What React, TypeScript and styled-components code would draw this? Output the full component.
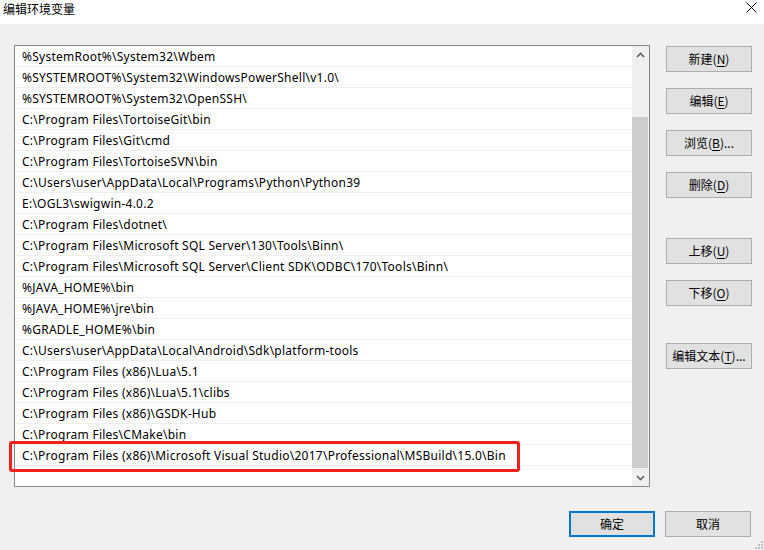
import React from "react";
import styled, { createGlobalStyle } from "styled-components";

const GlobalStyle = createGlobalStyle`
  html, body {
    margin: 0;
    padding: 0;
    background: #f0f0f0;
  }
  body {
    font-family: "Noto Sans", "Noto Sans CJK SC", sans-serif;
    font-size: 12px;
    color: #000;
  }
`;

const Window = styled.div`
  position: relative;
  width: 764px;
  height: 550px;
  background: #f0f0f0;
  display: flex;
  flex-direction: column;
  overflow: hidden;
`;

const TitleBar = styled.div`
  height: 24px;
  flex: 0 0 24px;
  background: #fff;
  display: flex;
  align-items: center;
  justify-content: space-between;
  padding: 0 7px 0 3px;
  box-sizing: border-box;
`;

const Title = styled.span`
  font-family: "Noto Sans CJK SC", sans-serif;
  font-size: 12px;
  line-height: 1;
  margin-top: -7px;
`;

const Close = styled.span`
  display: flex;
  margin-top: -9px;
`;

const Body = styled.div`
  flex: 1;
  display: flex;
  flex-direction: column;
`;

const MainRow = styled.div`
  display: flex;
  gap: 16px;
  padding: 21px 0 0 14px;
`;

const ListBox = styled.div`
  position: relative;
  width: 636px;
  height: 442px;
  box-sizing: border-box;
  border: 1px solid #828790;
  background: #fff;
  display: flex;
`;

const Rows = styled.div`
  flex: 1;
  display: flex;
  flex-direction: column;
`;

const Row = styled.div`
  height: 21px;
  box-sizing: border-box;
  border-bottom: 1px solid #f0f0f0;
  padding: 1px 0 0 7px;
  display: flex;
  align-items: center;
  white-space: nowrap;
  font-family: "Noto Sans", "Noto Sans CJK SC", sans-serif;
  font-size: 12px;
  letter-spacing: 0.25px;
`;

const ScrollBar = styled.div`
  width: 17px;
  flex: 0 0 17px;
  background: #f0f0f0;
  display: flex;
  flex-direction: column;
`;

const ArrowBtn = styled.div`
  height: 17px;
  flex: 0 0 17px;
  display: flex;
  align-items: center;
  justify-content: center;
`;

const Track = styled.div`
  flex: 1;
  display: flex;
  flex-direction: column;
  padding: 0 1px 0 0;
`;

const Thumb = styled.div<{ $top: number; $height: number }>`
  margin-top: ${(p) => p.$top}px;
  height: ${(p) => p.$height}px;
  background: #cdcdcd;
`;

const Highlight = styled.div`
  position: absolute;
  left: -6px;
  top: 395px;
  width: 511px;
  height: 31px;
  box-sizing: border-box;
  border: 3px solid #f0201a;
  border-radius: 3px;
  pointer-events: none;
`;

const ButtonColumn = styled.div`
  display: flex;
  flex-direction: column;
  padding-top: 1px;
`;

const Button = styled.div<{ $gap?: number; $default?: boolean }>`
  width: 86px;
  height: 26px;
  box-sizing: border-box;
  margin-top: ${(p) => p.$gap ?? 0}px;
  background: #e1e1e1;
  border: ${(p) => (p.$default ? "2px solid #0078d7" : "1px solid #adadad")};
  display: flex;
  align-items: center;
  justify-content: center;
  padding-bottom: 1px;
  font-family: "Noto Sans CJK SC", sans-serif;
  font-size: 12px;
  white-space: nowrap;
  u {
    text-underline-offset: 2px;
  }
`;

const Footer = styled.div`
  display: flex;
  justify-content: flex-end;
  gap: 10px;
  padding: 24px 13px 0 0;
`;

const Grip = styled.svg`
  position: absolute;
  right: 1px;
  bottom: 1px;
`;

const paths = [
  "%SystemRoot%\\System32\\Wbem",
  "%SYSTEMROOT%\\System32\\WindowsPowerShell\\v1.0\\",
  "%SYSTEMROOT%\\System32\\OpenSSH\\",
  "C:\\Program Files\\TortoiseGit\\bin",
  "C:\\Program Files\\Git\\cmd",
  "C:\\Program Files\\TortoiseSVN\\bin",
  "C:\\Users\\user\\AppData\\Local\\Programs\\Python\\Python39",
  "E:\\OGL3\\swigwin-4.0.2",
  "C:\\Program Files\\dotnet\\",
  "C:\\Program Files\\Microsoft SQL Server\\130\\Tools\\Binn\\",
  "C:\\Program Files\\Microsoft SQL Server\\Client SDK\\ODBC\\170\\Tools\\Binn\\",
  "%JAVA_HOME%\\bin",
  "%JAVA_HOME%\\jre\\bin",
  "%GRADLE_HOME%\\bin",
  "C:\\Users\\user\\AppData\\Local\\Android\\Sdk\\platform-tools",
  "C:\\Program Files (x86)\\Lua\\5.1",
  "C:\\Program Files (x86)\\Lua\\5.1\\clibs",
  "C:\\Program Files (x86)\\GSDK-Hub",
  "C:\\Program Files\\CMake\\bin",
  "C:\\Program Files (x86)\\Microsoft Visual Studio\\2017\\Professional\\MSBuild\\15.0\\Bin",
];

const Chevron = ({ up }: { up?: boolean }) => (
  <svg width="9" height="6" viewBox="0 0 9 6">
    <path
      d={up ? "M1 5 L4.5 1.5 L8 5" : "M1 1 L4.5 4.5 L8 1"}
      fill="none"
      stroke="#606060"
      strokeWidth="1.6"
    />
  </svg>
);

const label = (text: string, key: string, suffix = "") => (
  <span>
    {text}(<u>{key}</u>){suffix}
  </span>
);

export default function App() {
  return (
    <Window>
      <GlobalStyle />
      <TitleBar>
        <Title>编辑环境变量</Title>
        <Close>
          <svg width="11" height="11" viewBox="0 0 11 11">
            <path d="M0.5 0.5 L10.5 10.5 M10.5 0.5 L0.5 10.5" stroke="#000" strokeWidth="1" />
          </svg>
        </Close>
      </TitleBar>
      <Body>
        <MainRow>
          <ListBox>
            <Rows>
              {paths.map((p) => (
                <Row key={p}>{p}</Row>
              ))}
            </Rows>
            <ScrollBar>
              <ArrowBtn>
                <Chevron up />
              </ArrowBtn>
              <Track>
                <Thumb $top={54} $height={351} />
              </Track>
              <ArrowBtn>
                <Chevron />
              </ArrowBtn>
            </ScrollBar>
            <Highlight />
          </ListBox>
          <ButtonColumn>
            <Button>{label("新建", "N")}</Button>
            <Button $gap={16}>{label("编辑", "E")}</Button>
            <Button $gap={16}>{label("浏览", "B", "...")}</Button>
            <Button $gap={16}>{label("删除", "D")}</Button>
            <Button $gap={40}>{label("上移", "U")}</Button>
            <Button $gap={16}>{label("下移", "O")}</Button>
            <Button $gap={37}>{label("编辑文本", "T", "...")}</Button>
          </ButtonColumn>
        </MainRow>
        <Footer>
          <Button $default>确定</Button>
          <Button>取消</Button>
        </Footer>
      </Body>
      <Grip width="8" height="8" viewBox="0 0 8 8">
        <rect x="6" y="0" width="2" height="2" fill="#bdbdbd" />
        <rect x="3" y="3" width="2" height="2" fill="#bdbdbd" />
        <rect x="6" y="3" width="2" height="2" fill="#bdbdbd" />
        <rect x="0" y="6" width="2" height="2" fill="#bdbdbd" />
        <rect x="3" y="6" width="2" height="2" fill="#bdbdbd" />
        <rect x="6" y="6" width="2" height="2" fill="#bdbdbd" />
      </Grip>
    </Window>
  );
}
